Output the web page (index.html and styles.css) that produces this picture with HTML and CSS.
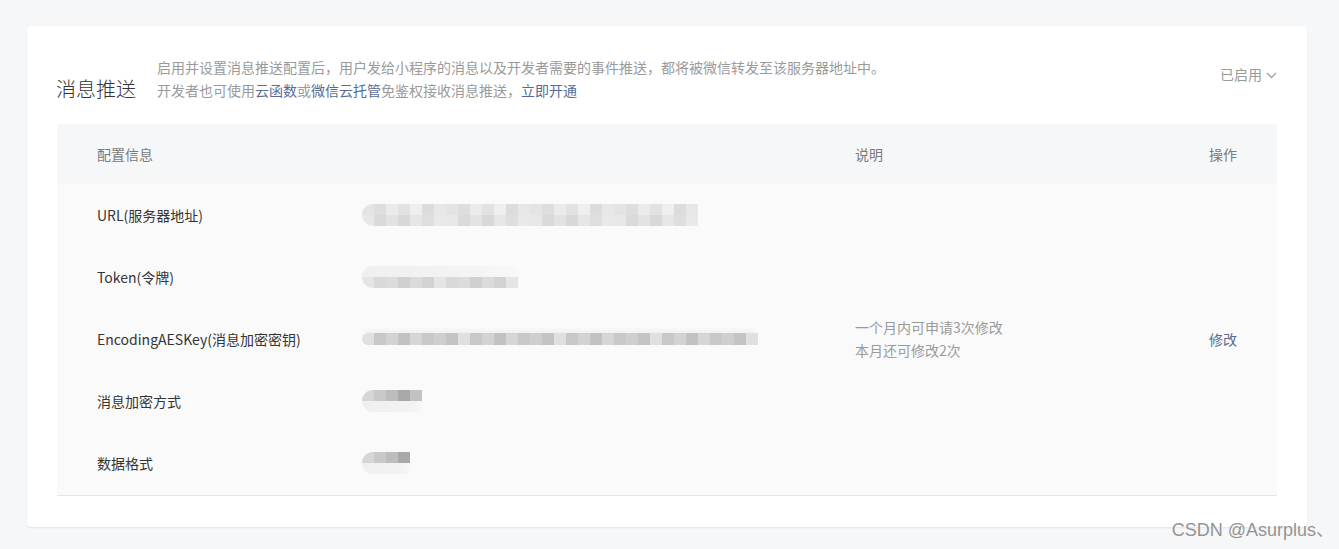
FILE: index.html
```html
<!DOCTYPE html>
<html lang="zh-CN">
<head>
<meta charset="utf-8">
<title>消息推送</title>
<link rel="stylesheet" href="styles.css">
</head>
<body>
<div class="card">
  <div class="head">
    <h2 class="title">消息推送</h2>
    <div class="desc">
      <p>启用并设置消息推送配置后，用户发给小程序的消息以及开发者需要的事件推送，都将被微信转发至该服务器地址中。</p>
      <p>开发者也可使用<a class="link">云函数</a>或<a class="link">微信云托管</a>免鉴权接收消息推送，<a class="link">立即开通</a></p>
    </div>
    <div class="status">已启用<svg class="chev" width="11" height="7" viewBox="0 0 11 7"><path d="M1 1l4.5 4.5L10 1" fill="none" stroke="#a0a0a0" stroke-width="1.4"/></svg></div>
  </div>
  <div class="table">
    <div class="row thead">
      <div class="c1">配置信息</div>
      <div class="c2"></div>
      <div class="c3">说明</div>
      <div class="c4">操作</div>
    </div>
    <div class="tbody">
      <div class="row">
        <div class="c1">URL(服务器地址)</div>
        <div class="c2"><span class="blur tall" style="width:336px"></span></div>
        <div class="c3"></div>
        <div class="c4"></div>
      </div>
      <div class="row">
        <div class="c1">Token(令牌)</div>
        <div class="c2"><span class="blur tall light-top" style="width:156px"></span></div>
        <div class="c3"></div>
        <div class="c4"></div>
      </div>
      <div class="row">
        <div class="c1">EncodingAESKey(消息加密密钥)</div>
        <div class="c2"><span class="blur strip" style="width:396px"></span></div>
        <div class="c3 note"><p>一个月内可申请3次修改</p><p>本月还可修改2次</p></div>
        <div class="c4"><a class="link">修改</a></div>
      </div>
      <div class="row">
        <div class="c1">消息加密方式</div>
        <div class="c2"><span class="blur tall dark-top" style="width:60px"></span></div>
        <div class="c3"></div>
        <div class="c4"></div>
      </div>
      <div class="row">
        <div class="c1">数据格式</div>
        <div class="c2"><span class="blur tall dark-top" style="width:48px"></span></div>
        <div class="c3"></div>
        <div class="c4"></div>
      </div>
    </div>
  </div>
</div>
<div class="watermark">CSDN @Asurplus、</div>
</body>
</html>
```
FILE: styles.css
```css
* { box-sizing: border-box; }
html, body { margin: 0; }
body {
  background: #f6f7f9;
  padding: 26px 32px 0 27px;
  font-family: "Noto Sans CJK SC", "Noto Sans", sans-serif;
  color: #353535;
  height: 549px;
  overflow: hidden;
  position: relative;
}
p { margin: 0; }
.card {
  background: #fff;
  border-radius: 4px;
  box-shadow: 0 1px 2px rgba(0,0,0,0.08);
  padding: 30px 30px 30px 30px;
  height: 501px;
}
.head {
  display: flex;
  align-items: flex-end;
  margin-bottom: 22px;
}
.title {
  margin: 0 21px 0 -1px;
  font-size: 20px;
  font-weight: 300;
  line-height: 26px;
  color: #353535;
}
.desc {
  font-size: 14px;
  line-height: 23px;
  color: #9a9a9a;
}
.link { color: #576b95; text-decoration: none; cursor: pointer; }
.status {
  margin-left: auto;
  align-self: flex-start;
  margin-top: 7px;
  font-size: 14px;
  line-height: 23px;
  color: #9a9a9a;
  display: flex;
  align-items: center;
  gap: 4px;
}
.chev { display: block; margin-top: 2px; }
.table { border-bottom: 1px solid #e5e5e8; }
.row {
  display: grid;
  grid-template-columns: 305px 493px 354px 68px;
  align-items: center;
  height: 62px;
  font-size: 14px;
}
.row .c1 { padding-left: 40px; }
.thead {
  height: 60px;
  background: #f6f7f9;
  color: #7a7a7a;
}
.tbody { background: #fafafa; padding-bottom: 1px; }
.c2 { display: flex; align-items: center; }
.note { font-size: 14px; line-height: 23px; color: #9a9a9a; }
.blur {
  display: block;
  height: 22px;
  border-radius: 11px 0 0 11px;
  background:
    repeating-linear-gradient(90deg, #e4e4e4 0 12px, #dedede 12px 24px, #ebebeb 24px 36px, #e2e2e2 36px 48px, #efefef 48px 60px, #dcdcdc 60px 72px, #e7e7e7 72px 84px) top left / 100% 50% no-repeat,
    repeating-linear-gradient(90deg, #e8e8e8 0 12px, #dadada 12px 24px, #e3e3e3 24px 36px, #d8d8d8 36px 48px, #e6e6e6 48px 60px, #dfdfdf 60px 72px, #e9e9e9 72px 84px) bottom left / 100% 50% no-repeat;
}
.light-top {
  background:
    linear-gradient(90deg, #efefef, #f4f4f4 70%, #f8f8f8) top left / 100% 50% no-repeat,
    repeating-linear-gradient(90deg, #e5e5e5 0 12px, #d9d9d9 12px 24px, #dcdcdc 24px 36px, #d0d0d0 36px 48px, #dbdbdb 48px 60px, #d3d3d3 60px 72px) bottom left / 100% 50% no-repeat;
}
.dark-top {
  background:
    repeating-linear-gradient(90deg, #d6d6d6 0 12px, #c9c9c9 12px 24px, #bdbdbd 24px 36px, #a9a9a9 36px 48px, #c2c2c2 48px 60px) top left / 100% 50% no-repeat,
    linear-gradient(90deg, #efefef, #f2f2f2 80%, #f7f7f7) bottom left / 100% 50% no-repeat;
}
.strip {
  height: 12px;
  border-radius: 6px 0 0 6px;
  background: repeating-linear-gradient(90deg, #e0e0e0 0 12px, #c8c8c8 12px 24px, #d3d3d3 24px 36px, #c2c2c2 36px 48px, #d6d6d6 48px 60px, #c9c9c9 60px 72px, #cfcfcf 72px 84px, #c4c4c4 84px 96px);
  box-shadow: 0 -5px 4px -2px #f1f1f1;
}
.watermark {
  position: absolute;
  right: 5px;
  bottom: 8px;
  font-family: "Liberation Sans", "Noto Sans", sans-serif;
  font-size: 18px;
  color: #939393;
  text-shadow: 0 0 1px #fff;
}
```
